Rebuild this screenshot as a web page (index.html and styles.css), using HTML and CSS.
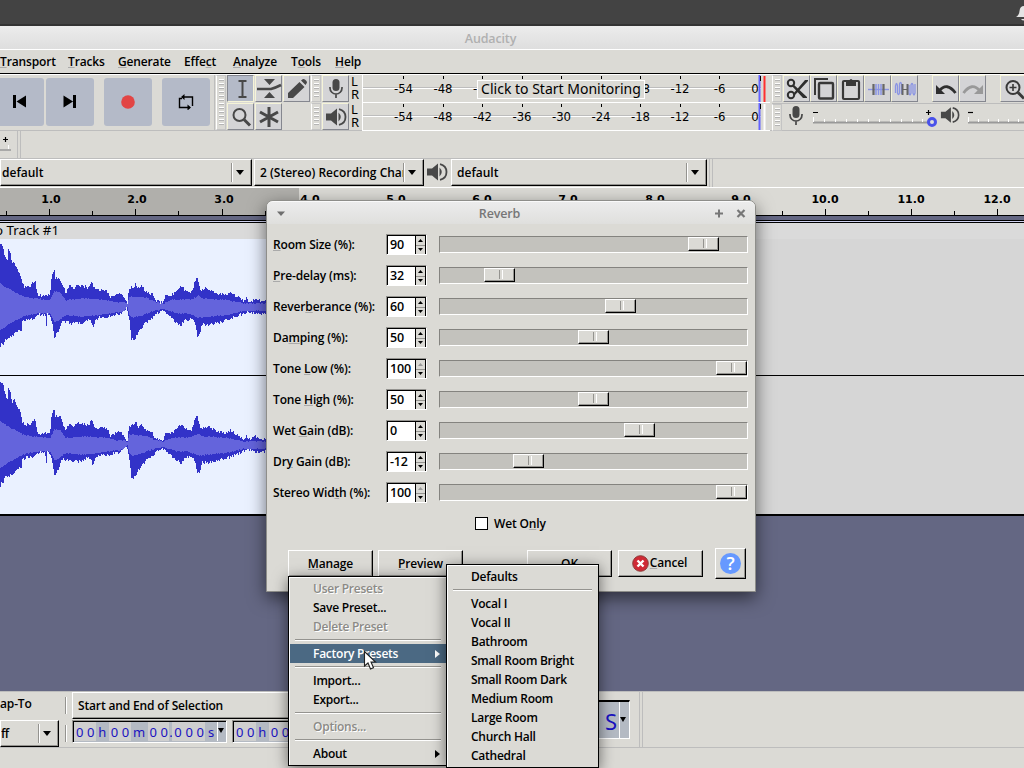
FILE: index.html
```html
<!DOCTYPE html>
<html lang="en">
<head>
  <meta charset="UTF-8">
  <title>Audacity</title>
  <link rel="stylesheet" href="styles.css">
</head>
<body>

  <!-- Icons -->
  <svg class="defs" width="0" height="0">
    <symbol id="mic" viewBox="0 0 20 24">
      <rect x="6.5" y="2" width="7" height="12" rx="3.5" fill="#484848"/>
      <path d="M4 10v1a6 6 0 0 0 12 0v-1M10 17v4" fill="none" stroke="#484848" stroke-width="1.7"/>
    </symbol>
    <symbol id="speaker" viewBox="0 0 22 22">
      <path d="M1 7.500h5l6-5v17l-6-5H1z" fill="#484848"/>
      <path d="M14 3.200q6.500 1.500 6.500 7.800t-6.500 7.800" fill="none" stroke="#484848" stroke-width="1.8"/>
      <path d="M13.500 6.500q4.500 4.500 0 9z" fill="#484848"/>
    </symbol>
  </svg>

  <div class="panel">
    <svg width="9" height="16" viewBox="0 0 9 16"><path d="M9 1q-4 0-4.500 5-.3 4-3.500 6h8zM6 14h3v1.500q-2 0-3-1.500z" fill="#e4e4e4"/></svg>
  </div>
  <div class="titlebar">Audacity</div>
  <div class="menubar">
    <span><u>T</u>ransport</span><span><u>T</u>racks</span><span><u>G</u>enerate</span><span>Effe<u>c</u>t</span><span><u>A</u>nalyze</span><span>T<u>o</u>ols</span><span><u>H</u>elp</span>
  </div>

  <div class="toolbars">
    <div class="transport">
      <div class="big first"><svg width="14" height="14"><path d="M0 0h3v13H0zM13 .5v12L3.500 6.500z"/></svg></div>
      <div class="big"><svg width="14" height="14"><path d="M10 0h3v13h-3zM.5 .5v12L10 6.500z"/></svg></div>
      <div class="big gap"><svg width="14" height="14"><circle cx="7" cy="7" r="6.800" fill="#e24545"/></svg></div>
      <div class="big gap"><svg width="16" height="16"><path d="M5 3H14.500V12M11 13.500H1.500V4.500H4M11 13.500H12" fill="none" stroke="#000" stroke-width="1.400"/><path d="M6.500 0v6L3 3zM9.500 10.500v6l3.500-3z"/></svg></div>
    </div>
    <div class="grip tall"></div>
    <div class="tools">
      <div class="tool on"><svg width="26" height="26"><path d="M10.500 5h8M10.500 21h8M14.500 5v16" fill="none" stroke="#484848" stroke-width="2"/></svg></div>
      <div class="tool"><svg width="26" height="26"><path d="M8 3h11l-5.500 6zM8 22h11l-5.500-6z" fill="#484848"/><path d="M1 13h14q4-1 10-4" fill="none" stroke="#484848" stroke-width="2.600"/></svg></div>
      <div class="tool"><svg width="26" height="26"><path d="M4 22v-5L15.500 6l5 5L9 22zM17 4.500l2-1.500q1.500-.5 3.500 2 1 1.500 0 2.500L21.500 9z" fill="#484848"/></svg></div>
      <div class="tool"><svg width="26" height="26"><circle cx="11.500" cy="11" r="6" fill="none" stroke="#484848" stroke-width="2"/><path d="M16 15.500l6 6" stroke="#484848" stroke-width="3"/></svg></div>
      <div class="tool"><svg width="26" height="26"><path d="M13 3v20M4 8l18 10M22 8L4 18" stroke="#484848" stroke-width="3"/></svg></div>
    </div>
    <div class="meters">
      <div class="row">
        <div class="grip"></div>
        <div class="tool"><svg width="20" height="24"><use href="#mic"/></svg></div>
        <div class="lr"><span>L</span><span>R</span></div>
        <svg class="meter" id="rec" width="408" height="28"></svg>
      </div>
      <div class="row">
        <div class="grip"></div>
        <div class="tool"><svg width="22" height="22"><use href="#speaker"/></svg></div>
        <div class="lr"><span>L</span><span>R</span></div>
        <svg class="meter" id="play" width="408" height="28"></svg>
      </div>
    </div>
    <div class="edit">
      <div class="row">
        <div class="grip"></div>
        <div class="tool"><svg width="24" height="24"><g fill="none" stroke="#2e2e2e" stroke-width="2"><circle cx="6" cy="6" r="3.200"/><circle cx="6" cy="18" r="3.200"/></g><path d="M8 7l14 13v1h-4L7 9zM8 17L20 3h3v1L10 18z" fill="#2e2e2e"/></svg></div>
        <div class="tool"><svg width="24" height="24"><path d="M3 18V2H16" fill="none" stroke="#383838" stroke-width="2"/><rect x="7" y="6" width="14" height="15.500" rx="1" fill="none" stroke="#383838" stroke-width="2.400"/></svg></div>
        <div class="tool"><svg width="24" height="24"><rect x="4" y="4" width="16" height="18" rx="1" fill="none" stroke="#383838" stroke-width="2.200"/><path d="M7 4h3q2-4 4 0h3v5H7z" fill="#383838"/></svg></div>
        <div class="tool"><svg width="24" height="24"><path d="M2 12.500h21" stroke="#8a94e4" stroke-width="1.400"/><path d="M10 7v11M12.500 7v11M15 7v11" stroke="#8a94e4" stroke-width="1.500"/><path d="M7.500 7v11M17.500 7v11" stroke="#666" stroke-width="2.200"/></svg></div>
        <div class="tool"><svg width="24" height="24"><path d="M2.500 16V9q1-5 2 0v7q1 3 2 0V7q1-3 2 0v10M16 8v8q1 4 2 0V8q1-3 2 0v8q1 4 2 0V7" fill="none" stroke="#8a94e4" stroke-width="1.300"/><path d="M9.500 7v11M14.500 7v11" stroke="#666" stroke-width="2"/><path d="M10 12.500h5" stroke="#666"/></svg></div>
        <div class="tool undo"><svg width="24" height="24"><path d="M5 14Q13 4.500 21.500 16" fill="none" stroke="#2e2e2e" stroke-width="2.800"/><path d="M2 8v9h9z" fill="#2e2e2e"/></svg></div>
        <div class="tool"><svg width="24" height="24"><path d="M19 14Q11 4.500 2.500 16" fill="none" stroke="#999" stroke-width="2.800"/><path d="M22 8v9h-9z" fill="#999"/></svg></div>
        <div class="tool zoomin"><svg width="24" height="24"><circle cx="11" cy="10.500" r="6.500" fill="none" stroke="#383838" stroke-width="2"/><path d="M16 15.500l6 6" stroke="#383838" stroke-width="3"/><path d="M7.500 10.500h7M11 7v7" stroke="#383838" stroke-width="1.600"/></svg></div>
      </div>
      <div class="row mixer">
        <div class="grip"></div>
        <svg width="20" height="24"><use href="#mic"/></svg>
        <svg class="vol" width="130" height="27">
          <path d="M2 8.500h5M115 8.500h5M117.500 6v5" stroke="#000" stroke-width="1.200"/>
          <path d="M2 18.500h118" stroke="#999" stroke-width="2"/>
          <path d="M2.500 13v5M13.500 15v3M24.500 15v3M35.500 15v3M46.500 15v3M57.500 15v3M68.500 15v3M79.500 15v3M90.500 15v3M101.500 15v3M111.500 15v3" stroke="#fff"/>
          <circle cx="121" cy="18" r="3.500" fill="#ddd" stroke="#4a52ea" stroke-width="3"/>
        </svg>
        <svg class="spk" width="20" height="22"><use href="#speaker"/></svg>
        <svg class="vol2" width="57" height="27">
          <path d="M0 8.500h5" stroke="#000" stroke-width="1.200"/>
          <path d="M0 18.500h57" stroke="#999" stroke-width="2"/>
          <path d="M.5 13v5M10.500 15v3M20.500 15v3M30.500 15v3M40.500 15v3M50.500 15v3" stroke="#fff"/>
        </svg>
      </div>
    </div>
  </div>

  <div class="speedbar">
    <svg width="22" height="28"><path d="M3 8.500h5M5.500 6v5" stroke="#000" stroke-width="1.200"/><path d="M0 19h11" stroke="#999" stroke-width="1.500"/><path d="M8.500 14v4" stroke="#fff"/><path d="M17.500 0v28M20.500 0v28" stroke="#bdbdbd"/></svg>
  </div>

  <div class="devices">
    <div class="combo host"><span>default</span><i></i></div>
    <div class="combo chans"><span>2 (Stereo) Recording Channels</span><i></i></div>
    <svg width="22" height="22"><use href="#speaker"/></svg>
    <div class="combo out"><span>default</span><i></i></div>
    <div class="end"></div>
  </div>

  <svg class="ruler" id="ruler" width="1024" height="29"></svg>

  <div class="tracks">
    <div class="track-name"><span>o Track #1</span></div>
    <svg id="wave" width="1024" height="277"></svg>
  </div>

  <div class="selection">
    <div class="snap">
      <div class="snap-label">ap-To</div>
      <div class="combo snap-combo"><span>ff</span><i></i></div>
    </div>
    <div class="seps"><b></b><b></b></div>
    <div class="range">
      <div class="combo wide"><span>Start and End of Selection</span></div>
      <div class="times">
        <div class="time"><b>00</b><em>h</em><b>00</b><em class="m">m</em><b>00</b><em class="dot">.</em><b class="ms">000</b><em class="s">s</em><i></i></div>
        <div class="time"><b>00</b><em>h</em><b>00</b><em class="m">m</em><b>00</b><em class="dot">.</em><b class="ms">000</b><em class="s">s</em><i></i></div>
      </div>
    </div>
    <div class="position"><span>s</span><i></i></div>
    <div class="end"></div>
  </div>

  <!-- Reverb window -->
  <div class="dialog">
    <div class="dialog-title">
      <svg width="10" height="6"><path d="M1 .5h8L5 5z" fill="#6e6e6e"/></svg>
      <span>Reverb</span>
      <svg width="34" height="12"><path d="M1 5.500h8M5 1.500v8" stroke="#777" stroke-width="2"/><path d="M23.500 2l7 7M30.500 2l-7 7" stroke="#777" stroke-width="2.200"/></svg>
    </div>
    <div class="params" id="params"></div>
    <div class="wet"><b></b><span>Wet O<u>n</u>ly</span></div>
    <div class="buttons">
      <div class="btn"><u>M</u>anage</div>
      <div class="btn preview"><u>P</u>review</div>
      <div class="btn ok"><u>O</u>K</div>
      <div class="btn cancel"><svg width="17" height="17"><circle cx="8.500" cy="8.500" r="7.800" fill="#cf2a35" stroke="#8c3a38"/><path d="M5.500 5.500l6 6M11.500 5.500l-6 6" stroke="#fff" stroke-width="2.400"/></svg><u>C</u>ancel</div>
      <div class="btn help"><span>?</span></div>
    </div>
  </div>

  <div class="menu presets">
    <div class="item off">User Presets</div>
    <div class="item">Save Preset...</div>
    <div class="item off">Delete Preset</div>
    <hr>
    <div class="item active">Factory Presets<i></i></div>
    <hr>
    <div class="item">Import...</div>
    <div class="item">Export...</div>
    <hr>
    <div class="item off">Options...</div>
    <hr>
    <div class="item">About<i></i></div>
  </div>
  <div class="menu factory">
    <div class="item">Defaults</div>
    <hr>
    <div class="item">Vocal I</div>
    <div class="item">Vocal II</div>
    <div class="item">Bathroom</div>
    <div class="item">Small Room Bright</div>
    <div class="item">Small Room Dark</div>
    <div class="item">Medium Room</div>
    <div class="item">Large Room</div>
    <div class="item">Church Hall</div>
    <div class="item">Cathedral</div>
  </div>
  <svg class="cursor" width="14" height="21"><path d="M1.500 1.500v14.500l3.500-3 2.500 6 3-1.300-2.500-5.700h4.500z" fill="#fff" stroke="#222" stroke-width="1.100"/></svg>

  <script src="script.js"></script>
</body>
</html>
```
FILE: styles.css
```css
* {
  box-sizing: border-box;
}

body {
  margin: 0;
  width: 1024px;
  height: 768px;
  overflow: hidden;
  position: relative;
  background: #dbdad5;
  color: #000;
  font-family: "Open Sans", "Noto Sans", sans-serif;
  font-size: 12px;
  font-weight: 600;
  line-height: 16px;
  letter-spacing: -0.15px;
}

svg {
  display: block;
  flex: none;
}

.defs {
  position: absolute;
}

u {
  text-decoration-color: #aaa;
  text-decoration-thickness: 1px;
  text-underline-offset: 1px;
}

/* Top of the screen */
.panel {
  height: 26px;
  padding-top: 5px;
  display: flex;
  justify-content: flex-end;
  background: #434343;
  border-bottom: 2px solid #333;
}

.titlebar {
  height: 24px;
  padding-right: 43px;
  line-height: 25px;
  text-align: center;
  color: #b0b0b0;
  font-size: 12.500px;
  background: linear-gradient(#ececec, #dedede);
  border-bottom: 1px solid #fff;
}

.menubar {
  height: 24px;
  display: grid;
  grid-template-columns: 68px 50px 66px 49px 58px 44px 60px;
  line-height: 23px;
  border-bottom: 1px solid #000;
}

/* Toolbars */
.toolbars {
  height: 57px;
  display: flex;
  border-top: 1px solid #fff;
  border-bottom: 1px solid #bdbdbd;
}

.toolbars > div {
  flex: none;
}

.transport {
  width: 215px;
  padding-top: 3px;
  display: flex;
  border-right: 1px solid #bdbdbd;
}

.big {
  width: 48px;
  height: 48px;
  flex: none;
  display: flex;
  align-items: center;
  justify-content: center;
  background: #b4bac8;
  border-radius: 3px;
}

.big + .big {
  margin-left: 2px;
}

.big.first {
  margin-left: -4px;
}

.big.gap {
  margin-left: 10px;
}

.grip {
  width: 10px;
  height: 27px;
  flex: none;
  border: 1px solid #c4c4c4;
  border-left-color: #fff;
  background: repeating-linear-gradient(#fff 0 1px, #b4b4b4 1px 2px, #dbdad5 2px 4px) center / 5px 20px no-repeat;
}

.grip.tall {
  height: 55px;
  margin: 0 1px;
  background-size: 5px 48px;
}

.tools {
  width: 84px;
  display: grid;
  grid-template-columns: repeat(3, 28px);
  grid-auto-rows: 28px;
}

.tool {
  width: 27px;
  height: 27px;
  flex: none;
  display: flex;
  align-items: center;
  justify-content: center;
  background: #d4d4d6;
  border: 1px solid #f5f4d8;
  border-right-color: #85878f;
  border-bottom-color: #85878f;
}

.tool.on {
  background: #b4bac8;
  border-color: #85878f #f5f4d8 #f5f4d8 #85878f;
}

.row {
  height: 28px;
  display: flex;
}

.meters {
  width: 461px;
}

.meters .tool {
  margin-left: 1px;
}

.lr {
  width: 13px;
  padding: 0 0 0 2px;
  font: 13px/13px "Noto Sans", sans-serif;
  display: flex;
  flex-direction: column;
}

.meter text {
  font: 13px "DejaVu Sans Condensed", "Noto Sans", sans-serif;
  letter-spacing: 0;
  text-anchor: middle;
}

.meter #hint {
  font: 14px "Noto Sans", sans-serif;
}

.edit .grip {
  margin-right: 1px;
}

.undo,
.zoomin {
  margin-left: 14px;
}

.mixer {
  border-top: 1px solid #bdbdbd;
}

.mixer svg {
  margin: 0 0 0 3px;
}

.mixer .vol {
  margin-left: 5px;
}

.mixer .spk {
  margin: 0 0 0 -1px;
}

.mixer .vol2 {
  margin: 0 0 0 8px;
}

.speedbar {
  height: 28px;
  border-bottom: 1px solid #bdbdbd;
}

.combo {
  height: 27px;
  display: flex;
  align-items: center;
  border: 1px solid #fff;
  border-right: 1px solid #000;
  border-bottom: 1px solid #000;
  box-shadow: inset -1px -1px #94938f;
}

.combo span {
  flex: 1;
  white-space: nowrap;
  overflow: hidden;
}

.combo i {
  width: 20px;
  height: 19px;
  flex: none;
  border-left: 1px solid #94938f;
  box-shadow: inset 1px 0 #fff;
  display: flex;
  align-items: center;
  padding-left: 4px;
}

.combo i::before,
.time i::before,
.position i::before {
  content: "";
  border: 4.500px solid transparent;
  border-top: 5px solid #000;
  border-bottom: 0;
}

.devices {
  height: 28px;
  display: flex;
  letter-spacing: 0;
}

.host {
  width: 252px;
  padding-left: 1px;
}

.chans {
  width: 170px;
  margin-left: 2px;
  padding-left: 5px;
}

.devices svg {
  margin: 2px 3px 0 2px;
}

.out {
  width: 256px;
  padding-left: 5px;
}

.end {
  width: 4px;
  margin-left: 2px;
  border: solid #bdbdbd;
  border-width: 0 1px;
}

/* Timeline and waveforms */
.ruler text {
  font: bold 11px "DejaVu Sans", sans-serif;
  letter-spacing: 0;
  text-anchor: middle;
}

.tracks {
  height: 476px;
  padding-top: 4px;
  background: #646783;
  border-bottom: 1px solid #bdbdbd;
}

.track-name {
  height: 19px;
  border-top: 1px solid #000;
  background: #dadada;
  box-shadow: inset 0 1px #cfd2f0, inset 0 2px #000;
  font: 13.300px/18px "Noto Sans", sans-serif;
  letter-spacing: 0;
}

.track-name span {
  margin-left: -5px;
}

/* Selection toolbar */
.selection {
  height: 56px;
  display: flex;
  border-bottom: 1px solid #bdbdbd;
}

.snap {
  width: 59px;
}

.snap-label {
  height: 28px;
  line-height: 24px;
}

.snap-combo {
  letter-spacing: -0.5px;
}

.seps {
  width: 13px;
  padding: 5px 0 0 6px;
}

.seps b {
  display: block;
  width: 2px;
  height: 17px;
  margin-bottom: 11px;
  border-left: 1px solid #94938f;
  border-right: 1px solid #fff;
}

.range {
  width: 400px;
}

.wide {
  width: 400px;
  padding-left: 5px;
}

.times {
  display: flex;
  gap: 5px;
  padding-top: 1px;
}

.time {
  width: 155px;
  height: 23px;
  padding: 1px 0 1px 1px;
  display: flex;
  background: #b4bac3;
  border: 1px solid #94938f;
  border-right-color: #fff;
  border-bottom-color: #fff;
  box-shadow: inset 1px 1px #000;
  color: #1a12c0;
  font: 13px/20px "Noto Sans", sans-serif;
}

.time b {
  width: 22px;
  padding-left: 2px;
  background: #cfcfcf;
  font-weight: normal;
  letter-spacing: 3.600px;
  overflow: hidden;
}

.time .ms {
  width: 33px;
}

.time em {
  width: 13px;
  text-align: center;
  font-style: normal;
  line-height: 21px;
}

.time .m {
  width: 17px;
}

.time .dot {
  width: 3px;
}

.time .s {
  width: 12px;
}

.time i {
  width: 9px;
  padding-top: 6px;
  border-left: 1px solid #fff;
}

.time i::before,
.position i::before {
  display: block;
  width: 0;
  border-width: 5px 3.500px 0;
}

.position {
  width: 158px;
  height: 39px;
  margin-top: 8px;
  display: flex;
  justify-content: flex-end;
  background: #b4bac3;
  border: 2px solid #000;
  border-right: 1px solid #fff;
  border-bottom: 1px solid #fff;
  color: #1a12c0;
  font: 22px/38px "Noto Sans", sans-serif;
  text-transform: uppercase;
}

.position i {
  width: 10px;
  margin-left: 2px;
  padding-top: 15px;
  border-left: 1px solid #fff;
}

.selection .end {
  margin-left: 9px;
  height: 55px;
}

/* Reverb window */
.dialog {
  position: absolute;
  left: 266px;
  top: 200px;
  width: 490px;
  height: 392px;
  background: #dbdad5;
  border: 1px solid #8e8e8a;
  border-radius: 7px 7px 0 0;
  box-shadow: 0 6px 18px rgba(0, 0, 0, 0.55);
}

.dialog-title {
  height: 23px;
  padding: 1px 7px 0 9px;
  display: flex;
  align-items: center;
  justify-content: space-between;
  color: #777;
  font-size: 12.500px;
  background: linear-gradient(#ececec, #dfdfdd);
  border-top: 1px solid #fafafa;
  border-radius: 6px 6px 0 0;
}

.dialog-title span {
  margin-right: 1px;
}

.params {
  padding: 5px 8px 0 6px;
}

.param {
  height: 31px;
  display: flex;
  align-items: center;
}

.param label {
  width: 113px;
  flex: none;
}

.spin {
  width: 41px;
  height: 21px;
  flex: none;
  display: flex;
  background: #fff;
  border: 1px solid #94938f;
  border-right-color: #fff;
  border-bottom-color: #fff;
  box-shadow: inset 1px 1px #000;
  font-size: 12.500px;
}

.spin span {
  width: 28px;
  flex: none;
  padding-left: 3px;
  line-height: 20px;
}

.spin svg {
  margin-top: 1px;
}

.slider {
  width: 309px;
  height: 17px;
  flex: none;
  margin: -1px 0 0 12px;
  background: #c3c2bd;
  border: 1px solid #fff;
  border-top-color: #84837f;
  border-left-color: #84837f;
}

.slider div {
  width: 31px;
  height: 14px;
  display: flex;
  align-items: center;
  justify-content: center;
  background: #dbdad5;
  border: 1px solid #fff;
  border-right-color: #000;
  border-bottom-color: #000;
  box-shadow: inset -1px -1px #94938f;
}

.slider div::before {
  content: "";
  width: 2px;
  height: 9px;
  margin-left: 2px;
  border-left: 1px solid #94938f;
  border-right: 1px solid #fff;
}

.wet {
  height: 40px;
  padding: 0 0 9px 208px;
  display: flex;
  align-items: center;
  gap: 6px;
}

.wet b {
  width: 13px;
  height: 13px;
  background: #fff;
  border: 1px solid #000;
}

.buttons {
  padding-left: 21px;
  display: flex;
  align-items: center;
}

.btn {
  width: 85px;
  height: 27px;
  flex: none;
  display: flex;
  align-items: center;
  justify-content: center;
  border: 1px solid #fff;
  border-right-color: #000;
  border-bottom-color: #000;
  box-shadow: inset -1px -1px #94938f;
}

.preview {
  margin-left: 5px;
}

.ok {
  margin-left: 64px;
}

.cancel {
  margin-left: 6px;
  padding: 0 2px 1px 0;
}

.cancel svg {
  margin-right: 1px;
}

.help {
  width: 31px;
  height: 31px;
  margin-left: 12px;
}

.help span {
  width: 21px;
  height: 21px;
  border-radius: 50%;
  background: #6699ff;
  color: #fff;
  font-size: 18px;
  line-height: 21px;
  text-align: center;
}

/* Popup menus */
.menu {
  position: absolute;
  padding: 2px 0 1px;
  background: #dbdad5;
  border: 1px solid #000;
  box-shadow: inset 1px 1px #fff, 0 3px 14px rgba(0, 0, 0, 0.55);
  letter-spacing: -0.25px;
}

.presets {
  left: 288px;
  top: 576px;
  width: 160px;
  height: 190px;
}

.factory {
  left: 446px;
  top: 564px;
  width: 153px;
  height: 204px;
}

.item {
  height: 19px;
  margin-left: 1px;
  padding-left: 23px;
  line-height: 19px;
  display: flex;
  justify-content: space-between;
  align-items: center;
}

.item i {
  margin-right: 7px;
  border: 4px solid transparent;
  border-left: 5px solid currentColor;
  border-right: 0;
}

.item.off {
  color: #8b8a86;
  text-shadow: 1px 1px #fff;
}

.item.active {
  background: #4b6983;
  color: #fff;
}

.menu hr {
  height: 2px;
  margin: 3px 6px;
  border: 0;
  border-top: 1px solid #94938f;
  border-bottom: 1px solid #fff;
}

.cursor {
  position: absolute;
  left: 363px;
  top: 650px;
}
```
FILE: script.js
```js
// Effect parameters: label, value, thumb offset
const params = [
  ["<u>R</u>oom Size (%):", 90, 248],
  ["<u>P</u>re-delay (ms):", 32, 44],
  ["Rever<u>b</u>erance (%):", 60, 165],
  ["Da<u>m</u>ping (%):", 50, 138],
  ["Tone <u>L</u>ow (%):", 100, 276],
  ["Tone <u>H</u>igh (%):", 50, 138],
  ["Wet <u>G</u>ain (dB):", 0, 184],
  ["Dr<u>y</u> Gain (dB):", -12, 73],
  ["Stereo Wid<u>t</u>h (%):", 100, 276]
];

document.getElementById("params").innerHTML = params.map(([label, value, x]) => `
  <div class="param">
    <label>${label}</label>
    <div class="spin"><span>${value}</span>
      <svg width="11" height="18"><path d="M0 0h11v18H0z" fill="#dbdad5"/><path d="M.5 0v18M10.500 0v18" stroke="#000"/><path d="M1 9.500h9" stroke="#94938f"/><path d="M3 6h5L5.500 3z" fill="${value === 100 ? "#999" : "#000"}"/><path d="M3 12h5L5.500 15z"/></svg>
    </div>
    <div class="slider"><div style="margin-left: ${x}px"></div></div>
  </div>`).join("");

// Level meters, -54 dB to 0 dB
function drawMeter(id, hint) {
  let out = '<path d="M0 12.500h399" stroke="#bdbdbd"/><path d="M0 13.500h399M0 27.500h408M.5 0v27" stroke="#fff"/>';
  for (let i = 0; i < 10; i++) {
    const x = 41.5 + i * 39.5;
    const db = i === 9 ? 0 : -54 + i * 6;
    out += `<path d="M${Math.floor(x)}.5 1v3" stroke="#000"/>`;
    // the hint box covers these labels completely
    if (!hint || db < -36 || db > -24) {
      out += `<text x="${i === 9 ? 393 : x}" y="17.500">${db}</text>`;
    }
  }
  out += '<path d="M397.500 0v27" stroke="#6464ff" stroke-width="2"/><path d="M398.500 1v5" stroke="#000"/>';
  if (hint) {
    out += '<path d="M402.500 1v26" stroke="#ff3030" stroke-width="2"/><rect x="115.500" y="5.500" width="167" height="18" fill="#dbdad5" stroke="#fff"/>';
    out += '<text id="hint" x="199" y="19">Click to Start Monitoring</text>';
  } else {
    out += '<path d="M402.500 1v26" stroke="#fff" stroke-width="2"/>';
  }
  document.getElementById(id).innerHTML = out;
}
drawMeter("rec", true);
drawMeter("play", false);

// Timeline
let ticks = '<path d="M0 .5h1024" stroke="#fff"/><path d="M0 1h299v27H0z" fill="#b0afab"/><path d="M0 28.500h1024" stroke="#000"/>';
for (let n = 1; n <= 24; n++) {
  const x = Math.round(6 + (n - 1) * 43.1);
  ticks += `<path d="M${x}.5 ${n % 2 ? 24 : 22}V28" stroke="#000"/>`;
  if (n % 2 === 0) {
    ticks += `<text x="${x + (n < 20 ? 2 : 0)}" y="16">${n / 2}.0</text>`;
  }
}
document.getElementById("ruler").innerHTML = ticks;

// Waveform envelopes, in thirds of a pixel
const peakTop = [0,90,8,90,15,125,22,135,25,105,32,120,36,148,42,140,50,160,60,175,65,200,72,215,90,215,98,200,106,202,110,235,118,243,150,238,155,180,163,170,166,188,180,192,190,215,197,232,210,210,220,222,232,208,265,218,275,202,285,225,320,225,330,248,355,235,370,245,382,268,386,225,395,215,400,220,406,205,415,220,425,215,440,232,455,235,467,258,487,264,497,240,520,238,535,220,543,214,560,228,575,232,583,205,590,183,600,225,620,220,650,235,680,240,693,232,710,245,730,258,738,250,750,262,765,250,780,258,900,250];
const peakBottom = [0,402,5,382,10,390,15,370,22,375,40,360,55,345,64,345,66,320,80,312,100,312,110,300,135,298,139,332,141,298,150,300,157,330,163,368,175,350,185,320,200,320,215,325,245,325,260,315,272,315,278,338,285,318,295,308,325,306,345,300,365,295,380,280,387,310,394,374,405,372,415,350,435,325,455,310,470,295,487,286,505,300,525,320,543,330,555,315,575,312,585,325,592,362,600,358,605,325,620,330,650,325,690,312,720,300,745,290,770,298,900,290];
const rmsTop = [0,205,20,218,70,245,100,250,150,255,163,228,180,232,197,255,250,250,320,255,350,262,375,262,382,268,388,245,440,248,467,262,490,266,510,255,575,252,595,242,610,250,680,255,730,265,900,265];
const rmsBottom = [0,345,40,320,75,302,115,295,150,295,163,322,175,318,197,300,240,305,300,300,340,293,370,290,382,275,388,300,395,308,430,300,455,290,487,282,530,295,560,295,595,308,680,300,730,288,900,288];

function valueAt(points, x) {
  for (let i = 2; i < points.length; i += 2) {
    if (x <= points[i]) {
      const t = (x - points[i - 2]) / (points[i] - points[i - 2]);
      return points[i - 1] + t * (points[i + 1] - points[i - 1]);
    }
  }
  return points[points.length - 1];
}

function noise(n) {
  const v = Math.sin(n * 127.1) * 43758.5453;
  return v - Math.floor(v) - 0.5;
}

// One bar per pixel column, the track area starts at y = 239
function bars(top, bottom, dy, rough) {
  let d = "";
  for (let x = 0; x < 299; x++) {
    const y1 = Math.round(valueAt(top, x * 3 + 1) / 3 - 24 + dy + noise(x + dy) * rough);
    const y2 = Math.round(valueAt(bottom, x * 3 + 1) / 3 - 24 + dy + noise(x * 2 + dy + 7) * rough);
    d += `M${x} ${y1}h1V${y2}h-1z`;
  }
  return d;
}

let wave = '<path d="M0 0h1024v277H0z" fill="#d6d6d6"/><path d="M0 0h299v277H0z" fill="#eaf1ff"/>';
[0, 138].forEach(dy => {
  wave += `<path d="${bars(peakTop, peakBottom, dy, 3)}" fill="#3232c8"/>`;
  wave += `<path d="${bars(rmsTop, rmsBottom, dy, 1.2)}" fill="#6464dc"/>`;
});
wave += '<path d="M0 136.500h1024" stroke="#000"/><path d="M0 276h1024" stroke="#000" stroke-width="2"/>';
document.getElementById("wave").innerHTML = wave;
```
